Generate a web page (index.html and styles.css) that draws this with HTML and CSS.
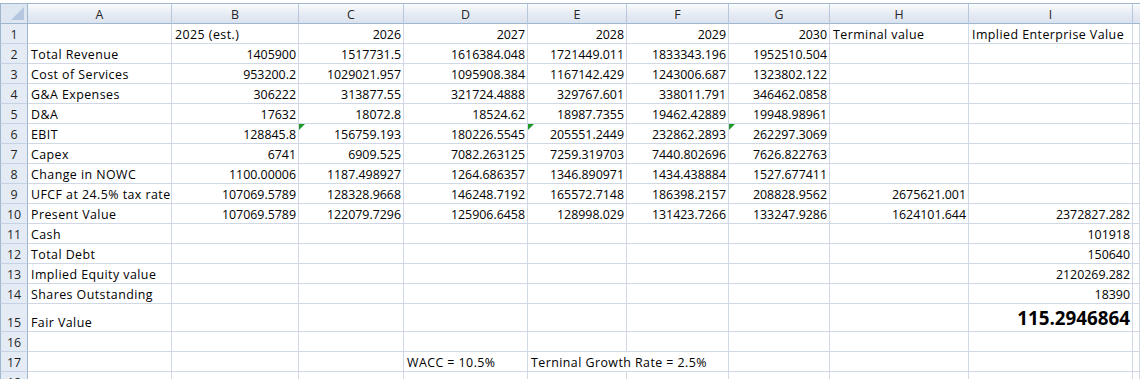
FILE: index.html
```html
<!DOCTYPE html>
<html>
<head>
<meta charset="utf-8">
<link rel="stylesheet" href="styles.css">
</head>
<body>
<div class="sheet">
  <div class="corner"><span class="tri"></span></div>
  <div class="ch">A</div><div class="ch">B</div><div class="ch">C</div><div class="ch">D</div><div class="ch">E</div><div class="ch">F</div><div class="ch">G</div><div class="ch">H</div><div class="ch">I</div><div class="ch last"></div>

  <div class="rh">1</div><div class="c"></div><div class="c t">2025 (est.)</div><div class="c n">2026</div><div class="c n">2027</div><div class="c n">2028</div><div class="c n">2029</div><div class="c n">2030</div><div class="c t">Terminal value</div><div class="c t">Implied Enterprise Value</div><div class="c"></div>

  <div class="rh">2</div><div class="c t">Total Revenue</div><div class="c n">1405900</div><div class="c n">1517731.5</div><div class="c n">1616384.048</div><div class="c n">1721449.011</div><div class="c n">1833343.196</div><div class="c n">1952510.504</div><div class="c"></div><div class="c"></div><div class="c"></div>

  <div class="rh">3</div><div class="c t">Cost of Services</div><div class="c n">953200.2</div><div class="c n">1029021.957</div><div class="c n">1095908.384</div><div class="c n">1167142.429</div><div class="c n">1243006.687</div><div class="c n">1323802.122</div><div class="c"></div><div class="c"></div><div class="c"></div>

  <div class="rh">4</div><div class="c t">G&amp;A Expenses</div><div class="c n">306222</div><div class="c n">313877.55</div><div class="c n">321724.4888</div><div class="c n">329767.601</div><div class="c n">338011.791</div><div class="c n">346462.0858</div><div class="c"></div><div class="c"></div><div class="c"></div>

  <div class="rh">5</div><div class="c t">D&amp;A</div><div class="c n">17632</div><div class="c n">18072.8</div><div class="c n">18524.62</div><div class="c n">18987.7355</div><div class="c n">19462.42889</div><div class="c n">19948.98961</div><div class="c"></div><div class="c"></div><div class="c"></div>

  <div class="rh">6</div><div class="c t">EBIT</div><div class="c n">128845.8</div><div class="c n flag">156759.193</div><div class="c n">180226.5545</div><div class="c n flag">205551.2449</div><div class="c n">232862.2893</div><div class="c n flag">262297.3069</div><div class="c"></div><div class="c"></div><div class="c"></div>

  <div class="rh">7</div><div class="c t">Capex</div><div class="c n">6741</div><div class="c n">6909.525</div><div class="c n">7082.263125</div><div class="c n">7259.319703</div><div class="c n">7440.802696</div><div class="c n">7626.822763</div><div class="c"></div><div class="c"></div><div class="c"></div>

  <div class="rh">8</div><div class="c t">Change in NOWC</div><div class="c n">1100.00006</div><div class="c n">1187.498927</div><div class="c n">1264.686357</div><div class="c n">1346.890971</div><div class="c n">1434.438884</div><div class="c n">1527.677411</div><div class="c"></div><div class="c"></div><div class="c"></div>

  <div class="rh">9</div><div class="c t">UFCF at 24.5% tax rate</div><div class="c n">107069.5789</div><div class="c n">128328.9668</div><div class="c n">146248.7192</div><div class="c n">165572.7148</div><div class="c n">186398.2157</div><div class="c n">208828.9562</div><div class="c n">2675621.001</div><div class="c"></div><div class="c"></div>

  <div class="rh">10</div><div class="c t">Present Value</div><div class="c n">107069.5789</div><div class="c n">122079.7296</div><div class="c n">125906.6458</div><div class="c n">128998.029</div><div class="c n">131423.7266</div><div class="c n">133247.9286</div><div class="c n">1624101.644</div><div class="c n">2372827.282</div><div class="c"></div>

  <div class="rh">11</div><div class="c t">Cash</div><div class="c"></div><div class="c"></div><div class="c"></div><div class="c"></div><div class="c"></div><div class="c"></div><div class="c"></div><div class="c n">101918</div><div class="c"></div>

  <div class="rh">12</div><div class="c t">Total Debt</div><div class="c"></div><div class="c"></div><div class="c"></div><div class="c"></div><div class="c"></div><div class="c"></div><div class="c"></div><div class="c n">150640</div><div class="c"></div>

  <div class="rh">13</div><div class="c t">Implied Equity value</div><div class="c"></div><div class="c"></div><div class="c"></div><div class="c"></div><div class="c"></div><div class="c"></div><div class="c"></div><div class="c n">2120269.282</div><div class="c"></div>

  <div class="rh">14</div><div class="c t">Shares Outstanding</div><div class="c"></div><div class="c"></div><div class="c"></div><div class="c"></div><div class="c"></div><div class="c"></div><div class="c"></div><div class="c n">18390</div><div class="c"></div>

  <div class="rh">15</div><div class="c t">Fair Value</div><div class="c"></div><div class="c"></div><div class="c"></div><div class="c"></div><div class="c"></div><div class="c"></div><div class="c"></div><div class="c n big">115.2946864</div><div class="c"></div>

  <div class="rh">16</div><div class="c"></div><div class="c"></div><div class="c"></div><div class="c"></div><div class="c"></div><div class="c"></div><div class="c"></div><div class="c"></div><div class="c"></div><div class="c"></div>

  <div class="rh">17</div><div class="c"></div><div class="c"></div><div class="c"></div><div class="c t">WACC = 10.5%</div><div class="c t span2">Terninal Growth Rate = 2.5%</div><div class="c"></div><div class="c"></div><div class="c"></div><div class="c"></div>

  <div class="rh">18</div><div class="c"></div><div class="c"></div><div class="c"></div><div class="c"></div><div class="c"></div><div class="c"></div><div class="c"></div><div class="c"></div><div class="c"></div><div class="c"></div>
</div>
</body>
</html>
```

FILE: styles.css
```css
html, body {
  margin: 0;
  padding: 0;
  background: #ffffff;
  overflow: hidden;
}

body {
  width: 1140px;
  height: 379px;
  font-family: "Open Sans", "Liberation Sans", sans-serif;
  font-size: 12.4px;
  color: #000;
}

.sheet {
  margin-top: 3px;
  display: grid;
  grid-template-columns: 28px 144px 127px 105px 124px 99px 102px 101px 139px 164px 1fr;
  grid-template-rows: 21px repeat(14, 20px) 28px 20px 20px 20px;
}

.sheet > div {
  box-sizing: border-box;
  white-space: nowrap;
  overflow: visible;
  min-width: 0;
}

.corner {
  position: relative;
  background: #dde6f1;
  border: 1px solid #9eb6ce;
}

.corner .tri {
  position: absolute;
  right: 3px;
  bottom: 3px;
  width: 0;
  height: 0;
  border-left: 13px solid transparent;
  border-bottom: 13px solid #b4c7df;
}

.ch {
  background: linear-gradient(#f9fbfd, #e4eaf3 60%, #dbe3ef);
  border-top: 1px solid #9eb6ce;
  border-right: 1px solid #b8c8dc;
  border-bottom: 1px solid #9eb6ce;
  color: #262626;
  display: flex;
  align-items: center;
  justify-content: center;
  padding-top: 1px;
}

.ch.last {
  border-right: none;
}

.rh {
  background: #e4ebf5;
  border-left: 1px solid #9eb6ce;
  border-right: 1px solid #9eb6ce;
  border-bottom: 1px solid #c5d2e3;
  color: #1f1f1f;
  display: flex;
  align-items: flex-end;
  justify-content: center;
  line-height: 17px;
}

.c {
  position: relative;
  border-right: 1px solid #d0d7e5;
  border-bottom: 1px solid #d0d7e5;
  display: flex;
  align-items: flex-end;
  line-height: 17px;
}

.t {
  justify-content: flex-start;
  padding-left: 3px;
  letter-spacing: 0.45px;
}

.n {
  justify-content: flex-end;
  padding-right: 2px;
}

.big {
  font-weight: 700;
  font-size: 18.8px;
  line-height: 24px;
  padding-bottom: 1px;
}

.span2 {
  grid-column: span 2;
}

.flag::before {
  content: "";
  position: absolute;
  left: 0;
  top: 0;
  width: 0;
  height: 0;
  border-top: 6px solid #1d9a2b;
  border-right: 6px solid transparent;
}
```
